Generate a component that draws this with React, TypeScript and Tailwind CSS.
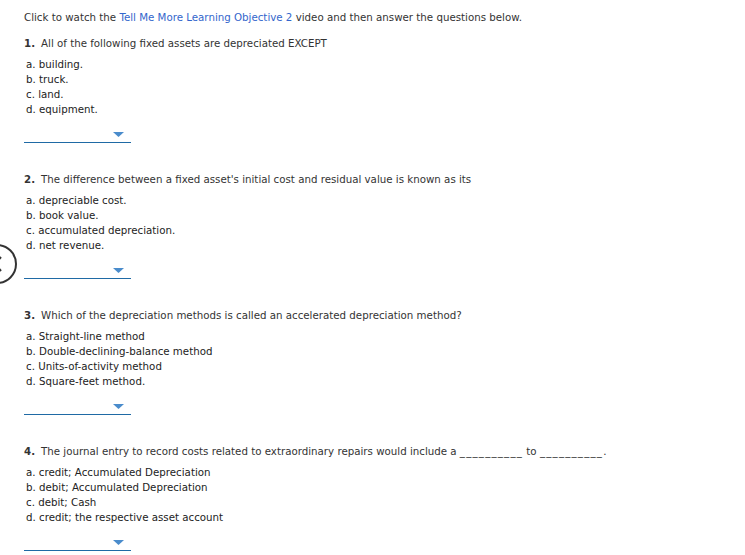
import React from "react";

const questions = [
  {
    n: "1.",
    text: "All of the following fixed assets are depreciated EXCEPT",
    options: ["a. building.", "b. truck.", "c. land.", "d. equipment."],
  },
  {
    n: "2.",
    text: "The difference between a fixed asset's initial cost and residual value is known as its",
    options: ["a. depreciable cost.", "b. book value.", "c. accumulated depreciation.", "d. net revenue."],
  },
  {
    n: "3.",
    text: "Which of the depreciation methods is called an accelerated depreciation method?",
    options: [
      "a. Straight-line method",
      "b. Double-declining-balance method",
      "c. Units-of-activity method",
      "d. Square-feet method.",
    ],
  },
];

function Blank() {
  return <span className="tracking-[1.2px]">__________</span>;
}

function Dropdown() {
  return (
    <div className="relative mt-[11px] h-[15px] w-[107px] border-b border-[#1f6aa5]">
      <svg className="absolute right-[7px] top-[4px]" width="11" height="5" viewBox="0 0 11 5">
        <path d="M0 0 H11 L5.5 5 Z" fill="#4a8ccc" />
      </svg>
    </div>
  );
}

function Question({ n, text, options }: { n: string; text: React.ReactNode; options: string[] }) {
  return (
    <div>
      <p>
        <span className="font-bold">{n}</span>
        <span className="ml-[6px]">{text}</span>
      </p>
      <ul className="mt-[6px] pl-[2px] text-[#222]">
        {options.map((o) => (
          <li key={o}>{o}</li>
        ))}
      </ul>
      <Dropdown />
    </div>
  );
}

export default function App() {
  return (
    <div className="relative h-[555px] w-[745px] overflow-hidden bg-white px-6 pt-[10px] text-[10.25px] leading-[15px] text-[#333] font-['DejaVu_Sans',Verdana,sans-serif]">
      <p>
        Click to watch the <span className="text-[#3366cc]">Tell Me More Learning Objective 2</span> video and then
        answer the questions below.
      </p>

      <div className="mt-[11px] flex flex-col gap-[29px]">
        {questions.map((q) => (
          <Question key={q.n} {...q} />
        ))}
        <Question
          n="4."
          text={
            <>
              The journal entry to record costs related to extraordinary repairs would include a <Blank /> to{" "}
              <Blank />.
            </>
          }
          options={[
            "a. credit; Accumulated Depreciation",
            "b. debit; Accumulated Depreciation",
            "c. debit; Cash",
            "d. credit; the respective asset account",
          ]}
        />
      </div>

      {/* side nav button */}
      <div className="absolute left-[-23px] top-[244px] flex h-[40px] w-[40px] items-center justify-end rounded-full border-2 border-[#333] pr-[13px]">
        <svg width="8" height="16" viewBox="0 0 8 16">
          <path d="M7 1 L1 8 L7 15" fill="none" stroke="#333" strokeWidth="2" />
        </svg>
      </div>
    </div>
  );
}
